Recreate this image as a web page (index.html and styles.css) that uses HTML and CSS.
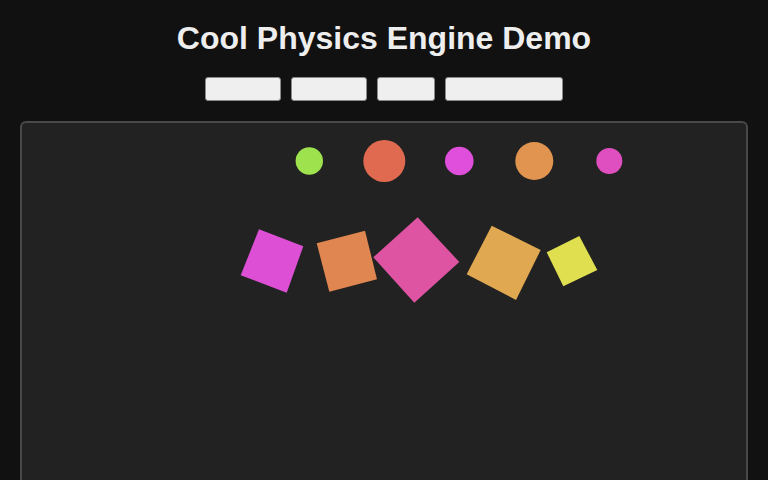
FILE: index.html
```html
<!DOCTYPE html>
<html lang="en">
<head>
<meta charset="utf-8">
<title>Cool Physics Engine Demo</title>
<link rel="stylesheet" href="styles.css">
</head>
<body>
<h1 class="title">Cool Physics Engine Demo</h1>
<div class="controls">
  <button class="btn btn-a"></button>
  <button class="btn btn-b"></button>
  <button class="btn btn-c"></button>
  <button class="btn btn-d"></button>
</div>
<div class="stage">
  <svg class="world" width="724" height="400" viewBox="22 123 724 400" xmlns="http://www.w3.org/2000/svg">
    <circle cx="309.3" cy="161" r="13.7" fill="#9ee24e"/>
    <circle cx="384.3" cy="161" r="21" fill="#e06a50"/>
    <circle cx="459.3" cy="161" r="14.3" fill="#df4fdb"/>
    <circle cx="534.3" cy="161" r="19" fill="#e0944f"/>
    <circle cx="609.3" cy="161" r="13" fill="#df4fbf"/>
    <polygon points="259,229.3 303.3,246.3 286.7,292.7 240.7,275.3" fill="#dd4fd5"/>
    <polygon points="316.7,243.3 365,230.7 377,279.3 329.3,291.7" fill="#e08650"/>
    <polygon points="417.7,217.3 459.3,262 414.3,302.7 373.3,257.3" fill="#df53a3"/>
    <polygon points="491.7,225.7 540.7,250 516,300 466.7,274.3" fill="#e0a850"/>
    <polygon points="579.3,236 597.3,270 563.3,286.3 546.7,252.3" fill="#e0df50"/>
  </svg>
</div>
</body>
</html>
```
FILE: styles.css
```css
html, body {
  margin: 0;
  padding: 0;
  background: #111111;
  overflow: hidden;
}
body {
  padding: 0 20px;
  font-family: "Liberation Sans", Arial, sans-serif;
  color: #eeeeee;
}
.title {
  margin: 20px 0 0;
  font-size: 32px;
  font-weight: bold;
  line-height: 36px;
  text-align: center;
  color: #eeeeee;
}
.controls {
  display: flex;
  justify-content: center;
  gap: 10px;
  margin-top: 21px;
  height: 24px;
}
.btn {
  height: 24px;
  padding: 0;
  margin: 0;
  background: #efefef;
  border: 1px solid #8a8a8a;
  border-radius: 3px;
}
.btn-a { width: 76px; }
.btn-b { width: 76px; }
.btn-c { width: 58px; }
.btn-d { width: 118px; }
.stage {
  margin-top: 20px;
  height: 400px;
  background: #222222;
  border: 2px solid #484848;
  border-radius: 6px;
  overflow: hidden;
}
.world {
  display: block;
}
```
